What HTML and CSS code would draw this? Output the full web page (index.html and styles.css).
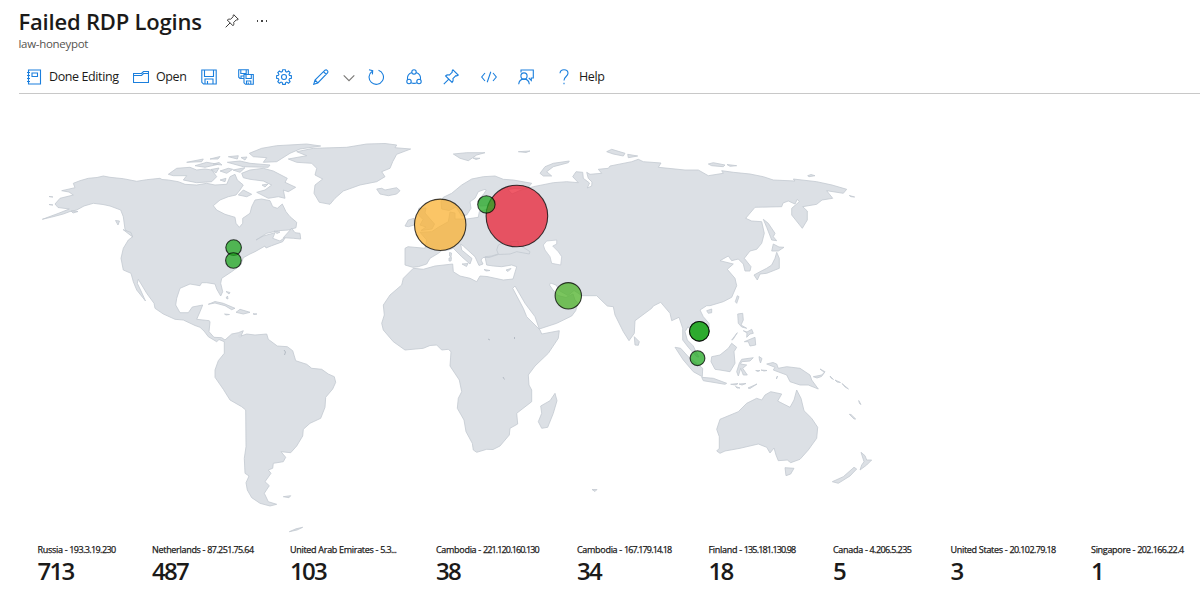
FILE: index.html
```
<!DOCTYPE html>
<html lang="en">
<head>
  <meta charset="UTF-8">
  <meta name="viewport" content="width=device-width, initial-scale=1.0">
  <title>Failed RDP Logins</title>
  <link rel="stylesheet" href="styles.css">
</head>
<body>

  <!-- Header -->
  <header class="header">
    <div class="title-row">
      <h1>Failed RDP Logins</h1>
      <svg class="title-pin" viewBox="0 0 16 16"><path d="M10 .8 15.200 6l-1.400.9-.9-.2-3 3c.5 1.600.2 2.700-.8 3.700L2.600 6.900c1-1 2.200-1.300 3.700-.8l3-3-.2-.9zM5.800 10.200.8 15.200"/></svg>
      <span class="dots"><i></i><i></i><i></i></span>
    </div>
    <div class="subtitle">law-honeypot</div>
  </header>

  <!-- Toolbar -->
  <nav class="toolbar">
    <div class="tool">
      <svg viewBox="0 0 16 16"><path d="M2.500 1h12v14h-12zM6 4h5.500v3.500H6zM1 3.500h3M1 6.500h3M1 9.500h3M1 12.500h3"/></svg>
      <span class="done-label">Done Editing</span>
    </div>
    <div class="tool">
      <svg viewBox="0 0 16 16"><path d="M.5 13.500v-9h8l2-2h5v11zM.5 6.500h8l2-2h5"/></svg>
      <span class="open-label">Open</span>
    </div>
    <svg viewBox="0 0 16 16"><path d="M.8 1h14.400v14H2.500L.8 13.300zM3.500 1v6.500h9V1M4 15v-5h8v5M6.500 12v3"/></svg>
    <svg viewBox="0 0 16 16"><path d="M6 9.500H2L.7 8.200V.7h9.600V5M2.800.7v3.800h5.400V.7M3 9.500V7h3M6 5.500h9.300v9.800H7.500L6 13.800zM8 5.500v4h5.300v-4M8.500 15.300V12h4.300v3.300M10.300 13.500v1.800"/></svg>
    <svg viewBox="0 0 16 16"><path d="M6.700.7h2.600l.4 1.900 1.100.5 1.700-1.100 1.600 1.600L13 5.200l.5 1.200 1.900.4v2.500l-1.900.4-.5 1.200 1.100 1.700-1.600 1.600-1.700-1.100-1.100.5-.4 1.800H6.700l-.4-1.800-1.200-.5-1.700 1.100-1.600-1.600 1.100-1.700-.5-1.200-1.800-.4V6.800l1.800-.4.500-1.200-1.100-1.600L3.400 2l1.700 1.100 1.200-.5z"/><circle cx="8" cy="8" r="2.500"/></svg>
    <svg viewBox="0 0 16 16"><path d="M.7 15.300 2 11 12 1.200q1.200-.9 2.300.3t.2 2.500L4.800 14zM2 11l2.800 3M10.500 2.700l2.800 2.800"/></svg>
    <svg class="chevron" viewBox="0 0 12 8"><path d="M.7 1.300 6 6.600l5.300-5.300"/></svg>
    <svg viewBox="0 0 16 16"><path d="M4.200 2.200A7.200 7.200 0 1 0 10.500 1.300M1 .8l3.700.8-.3 3.800"/></svg>
    <svg viewBox="0 0 16 16"><circle cx="8" cy="2.900" r="2.200"/><circle cx="3" cy="12.500" r="2.200"/><circle cx="13" cy="12.500" r="2.200"/><path d="M5.800 3.500C2.500 4.800 1 7.500 1.500 10.800M10.200 3.500c3.300 1.300 4.800 4 4.300 7.300M5.200 13.800q2.800 1.200 5.600 0"/></svg>
    <svg viewBox="0 0 16 16"><path d="M10 .8 15.200 6l-1.400.9-.9-.2-3 3c.5 1.600.2 2.700-.8 3.700L2.600 6.900c1-1 2.200-1.300 3.700-.8l3-3-.2-.9zM5.800 10.200.8 15.200"/></svg>
    <svg viewBox="0 0 16 16"><path d="M4 4 .7 8 4 12M12 4l3.300 4-3.300 4M9.800 2.800 6.200 13.200"/></svg>
    <svg viewBox="0 0 16 16"><path d="M3 3.500V1h12.300v8h-2v2.500l-2.500-2.500"/><circle cx="6" cy="7" r="3.100"/><path d="M.7 15.300c.2-3 2.300-5.200 5.300-5.200s5.100 2.200 5.300 5.200"/></svg>
    <div class="tool help">
      <svg viewBox="0 0 16 16"><path d="M4 4.200C4.200 2 5.700.8 8 .8s4 1.300 4 3.500c0 3.100-4 3.400-4 7.100M8 13.800v1.500"/></svg>
      <span>Help</span>
    </div>
  </nav>

  <!-- Map -->
  <main class="map">
    <svg viewBox="0 94 1200 446">
      <g class="land">
        <!-- Americas -->
        <path d="M73.300 183.300 80 180.700 88.300 178.300 97 177.500 103.300 176 110 177.300 123.300 178.700 136.700 181.300 146.700 179.700 160 178.300 162 179.500 168.300 180 178.300 181.700 185 184.300 196.700 185 206.700 183.300 215 185 226.700 184.300 230 176.700 235 174.300 237.300 180 243.300 185 240 190 236 195 228.300 196.700 220 200 213.300 205.700 216.700 210 225 214.300 235 217.300 236 223.300 239.300 227.300 242.700 223.300 242.700 218.300 250 213.300 251.700 206.700 255 200 261.700 199 270 200.700 272.700 206.700 277.300 208.300 282.300 204 286 211.700 290 216.700 296.700 222.300 296 227.700 288.300 230 278.300 230.700 266.700 233.300 256 240 263.300 236 275 232.700 272.700 238.300 280 241 286 236.500 282.700 241.700 271.700 245.700 266 248 265 246 255 251.700 250 254 243.300 257.700 240.700 265 231.700 271.700 221.700 278.300 220.700 283.300 222.700 291.700 220.700 296 216.700 289 215 284 206.700 282.700 201.700 282.700 200 285.700 190 284 180 288.300 176.700 298.300 175.700 305 180 312.700 188.300 312.700 192.300 307 202.700 305 200 311.700 196.700 319.300 209.300 320.700 210 322 209 331.700 214 337.300 221.700 337.700 225 340 231.700 334 238.300 332.700 243.300 330.700 241 336 246.700 334 255 335 266.700 334 268.300 339.300 277.300 346 287.300 346.700 292.700 350.700 295.700 360.700 306.700 364.300 311.700 368.300 321.700 369.300 328.300 374 334.300 376.700 335.700 382.300 332.700 389 325.700 397.300 325 407.300 320.700 418.300 310 423.300 303.300 429.300 302.700 436 296.700 446 290.700 452.700 281 451.700 285.700 457.300 283.300 461.700 273.300 463.300 272.700 468.300 268.300 470 271 473.300 265 481.700 269.300 485.700 264.300 493.300 268.300 501.700 276.700 504.300 270 506 260 503.300 251.700 497.700 247.300 490 246 482.700 249 476 245 473.300 244.300 458.300 246 446.700 245.700 410 241.700 406.700 230 400 223.300 389.300 215 377.300 215 370 218.300 360.700 224.300 353.300 224.300 341.700 219 339.500 216.700 341.700 208.300 336.700 204 331 200 327.300 195 325.500 183.300 320 175 319.300 163.300 314 155 308.300 154 303.300 146.700 293.300 138.300 279.300 137.300 283.300 141 291 145.500 301 136.700 290 133.300 281.700 131 273.300 123.300 270 121 258.300 123.300 248.300 128.300 240 132.700 236.700 125 229.300 123.300 216.700 120.700 210 110 206 103 204.500 93.300 203.300 84 206 76.700 210 70 211.500 63.300 214 54 216.500 42.300 219.300 58 213.500 69.300 209 58 207.500 55 204 60 198.300 73.300 195 69 192 61.700 190.700 75 187.700Z"/>
        <path d="M168.300 174.300 176.700 168.300 190 167.300 196.700 170 205 169 211.700 170 216.700 176.700 211.700 181.700 196.700 182.700 183.300 180 186.700 175.700 173.300 175.700Z"/>
        <path d="M186.700 162.300 203.300 159 201.700 161.700ZM195 165.700 206.700 162.300 218.300 164.300 205 167.300ZM210 159 220 156.500 218 159ZM220 171 228.300 168.300 232.700 169.300 226.700 173.300ZM220 180 226 178.300 225 181.700ZM228.300 156.700 238.300 155.700 237.300 159ZM227.300 162.300 240 161 250 163.300 270 165 268.300 167.300 243.300 166.700ZM233 170 245 167.700 240 172.300ZM211 169.500 219 168 216 173ZM213 164 219 162.500 222 165ZM241 157.500 247 157 245 160Z"/>
        <path d="M249.300 153.300 261.700 148.300 276.700 145.700 306.700 144 320.700 146 300 149 290 153.300 276.700 161.700 263.300 162.300 266.700 157.700 253.300 156.700Z"/>
        <path d="M241.700 173.300 250 170 263.300 168.300 273.300 171 287.300 178.300 285 182.300 295.700 187.300 288.300 191.700 283.300 190 285 198.300 278.300 196.700 268.300 198.300 256.700 192.300 265 190 271.700 185 263.300 181 250 179.300 243.300 177.700ZM238.300 195 243.300 190 251.700 194.300 246.700 196.700ZM262 185 268 184 265 187ZM283.300 237.700 291.700 228.300 295 232.700 300 233.300 300.700 239 293.300 238.300ZM274 231 280 232 277 233.500Z"/>
        <path d="M288.300 159 306.700 155.700 296.700 151.700 313.300 148.300 346.700 147.300 366.700 144 385 143.500 396.700 145 395 147.700 410.700 149 396.700 154.300 392.700 161.700 390 168.300 381.700 171.700 385 176.700 376.700 181.700 360 185 343.300 191 335 198.300 330 204.300 319.300 202.300 314 193.300 315 185 322.700 179 315 175 316.700 168.300 311.700 163.300 296.700 162.300Z"/>
        <path d="M376.700 189 381.700 188.300 385 190 396.700 187.700 400 190.700 396.700 194 388.300 195.700 380 194Z"/>
        <path d="M208.300 304.300 215 301.500 223.300 303.300 235 308.300 231.700 309.700 225 305.700 215 303ZM236 312.300 240 309.300 250 312.300 243.300 314ZM224.500 314 229.500 314.500 226 315ZM253 313.700 257 314 254 314.500ZM226 291.500 230 292.500 229 294ZM226 298 228 299 227.500 296Z"/>
        <path d="M283.300 496.700 290.700 495.700 289 497.700ZM289.300 531.700 296 528.800 302.700 527.300 297 530ZM123 229.500 131 232.500 132.700 237ZM115.500 220.500 119.500 221 118 225ZM49 196.500 53 197ZM49 204.500 53 205ZM71 211 78 211.500 73 213ZM592 489.500 597 489.500 595 491.500Z"/>

        <!-- Europe, Asia, Africa -->
        <path d="M405 248.300 408 246.700 425 248.300 426.700 240 420 232.300 431.700 231.700 438.300 227.300 448.300 221.700 450 212 455 213 455 219 466.700 219 478.300 217.300 479.300 211.700 486 209.500 497 208 492 205.500 480 206 478.500 200 484 193.500 486.300 190 485 189.300 478.300 191.700 475 198.300 470 201.700 471 208.300 466.700 215 461.700 216 456 207 449 210.500 441.700 209 441 201.700 443.300 197.300 451.700 193.300 461.700 185 471.700 179 483.300 176.700 495 176 503.300 179.300 513.300 180 531.700 183.300 527 189 514 188.500 508 189.500 512 194 521 190 533.300 186.700 553.300 182.700 566.700 181.700 578.300 182.700 572.700 176.700 576 171.700 582.700 172.300 583.300 178.300 589.500 183 587.300 188 591.700 186 592 182 588.300 178.300 586.700 172.300 590 174.300 601.700 173.300 598.300 169.300 608.300 168.300 610 166 631.700 161.700 638.300 159.300 643.300 161.700 661 163 658.300 167.300 685 170 698.300 170 708.300 175.700 723.300 173.300 721.700 170.700 733.300 172.300 750 174 763.300 176.700 773.300 180 795 181 793.300 179 816.700 181.700 832 185 846.700 189.300 843.300 193.300 826.700 190.700 832.700 198.300 822 200 816.700 204.300 802.700 206.700 807.300 211 807.300 220 802.300 228.300 791.700 215 791.700 208.300 799.300 201.700 797.300 199.300 795 204 788.300 201 783 203 781.700 206.700 755 207.300 745.700 218.300 751.700 221 761.700 221.700 764.300 233.300 761.700 243.300 756.700 249.300 750 251 744.300 258.300 751 266.700 750 271 745 271 743.300 264 738.300 259 731.700 260.700 728.300 256 720 260.700 733.300 264 727.300 269.300 735 278.300 736.700 285.700 731.700 297.300 723.300 301.700 710 305.700 706.700 305.700 700 310 703.300 316.700 709 323.300 709.300 331.700 703.300 338.300 698 341 695 335 688 326.700 685 331.700 687.300 340 693.300 346 696 351.700 699 357 696.700 356.700 688.300 347.300 682.700 340 682.700 328.300 679 317.300 671.700 320.700 670 313.300 660.700 302.300 653.300 306 651.700 308.300 635 320.700 634.300 333.300 629 340.700 623.300 331.700 615 315 613.300 306.700 607.300 306 600 299 596.700 295.700 582 295.700 574 290.500 568 295.500 560 291 556 285 550.500 283 549.500 285 553 290 558 295.500 566 297.500 573 294 575 300 578 303 575.700 310.700 571.700 316 556.700 323.300 539.300 329 535 316.700 525 303.300 515 286 512.700 288.300 523.300 308.300 526.700 316.700 540 330 541.700 334 559.300 330.700 558.300 338.300 548.300 353.300 535 366 528.300 375 529 385 531.700 390 531.700 401.700 516.700 413.300 517.700 424 510 428.300 509.300 435 500 446 493 449.500 486.700 449.300 476.700 452.300 473.300 450 472.300 443.300 466 431.700 464 420 457.300 408.300 458.300 398.300 461.700 391.700 459.300 380 450 366 451 351.700 448.300 349.300 441.700 350 436.700 345 430 345.500 423.300 348.300 405 350 393.300 341.700 383.300 330 381.700 323.300 384.300 315 383.300 305 390 295 401.700 285 403.300 278.300 413.300 268.300 423.300 269.300 435 266 452.700 264 453.300 271.700 460 276 470 278.300 476.700 281.700 480 276 487 276.500 503.300 280 513 279 516.700 266.700 511.700 265 501.700 266.700 493.300 266 486.700 265 485 256.700 491.700 256 498.300 254 496.700 250 498.300 245 505 242 512 246 510 242 518 241 518 245 523.300 247.300 530 251.700 529.300 254 516.700 251.700 510 254 498.300 254.500 489 257.500 483 257.500 481 260 483 264 479 265.500 475 256.700 463.300 246 460.700 244 461.700 250 472 258.500 470 264 461.700 256.700 453.300 248.300 448.300 250 441.700 250.700 438.300 253.300 430 258.300 426.700 264 418.300 266.700 412.700 267.300 405 265Z"/>
        <path d="M421 230.500 426 227 420 225 423 219.500 417.500 214 419 208 426 208 425 213 431 220 434.500 224 432 229 425 230ZM405 226 408.300 220 414 218.300 414.300 225 408.300 226.700Z"/>
        <path d="M453.300 154 466.700 152.700 485 152.700 476.700 155 468.300 160.700 460 158.300ZM473 158 480 158.300 476 159.500ZM518.300 151.700 530 151 526 152.500ZM540 173.300 545 166.700 553.300 163.300 569.300 161 568.300 162.700 553.300 166.700 546.700 171.700 551.700 176 543.300 176Z"/>
        <path d="M606.700 151.700 611.700 149.300 625 153.300 623.300 156 613.300 154ZM627.700 154.300 637.700 156 628.300 157.700ZM708.300 164 713.300 162.700 725 165 723.300 166.700 711.700 165.700ZM727 164.500 736.700 165.700 730 166.300ZM807.700 175.700 811 174.500 815 175.700 809 176.700ZM849.300 195.500 854.700 197 851 196.700Z"/>
        <path d="M449.500 252.500 451.500 253 451 257 449.500 256ZM449 258 451.500 257.500 451 261 449 261ZM462 264 468 263.500 466.500 266.500ZM484 269.500 490 270.500 486 271ZM506 270 511 268.500 508 271.500ZM555 393.300 557 400.700 553.300 413.300 547.700 427.300 541.700 428.300 538.300 421.700 541.700 413.300 540.700 406 550 400.700Z"/>
        <path d="M763.300 219.300 768.300 223.300 775 233.300 773.300 236.700 776.700 240.700 771.700 240 766.700 227.300ZM773.300 244 779 247 784 247.300 778.300 251 771.700 251ZM776.700 252.300 779.300 258.300 779.300 268.300 773.300 270.700 766.700 273.300 760 274 757.300 280 754 275 760 271.700 766.700 268.300 771.700 265 775 258.300Z"/>
        <path d="M737.300 295.700 739 296.700 736.700 303.300 735.300 301.700ZM706.700 310.700 711.700 309 711.700 312.700 708.300 313.300ZM634.300 336.700 639.300 341.700 638.300 345.300 635 345Z"/>
        <path d="M737.700 314 742.700 313.300 743.300 320 741 325 746.700 328.300 741.700 327 738.300 323.300ZM743.300 330.700 747 332 751.700 329.300 753.300 333.300 750 334 746.700 337.300 747 333ZM744.300 341.700 755 337.300 755.700 345 750 346 748.300 341.700ZM731.700 340 737.300 332.700 733 339.500Z"/>
        <path d="M711.700 356.700 720 355 728.300 348.300 731.700 343.300 736.700 347.300 734 351.700 735 363.300 730 371.700 720 370 715 369.300 711 361.700ZM741.700 359.300 753.300 357.700 750 361 741.700 361.700 740.500 364 746.700 365 742.700 368.300 747.300 375 743.300 375 740.700 368.300 738.300 376 736.700 371.700 739.300 363.300ZM675 347.300 680.700 348.300 688.300 356.700 702.700 368.300 702.300 376.700 693.300 371.700 683.300 360ZM701.700 377.300 713.300 378.300 726.700 383.300 725 384.300 703.300 380.700Z"/>
        <path d="M730.700 384.300 738 383.500 736 385ZM739 384 746 383.500 742 385ZM735.500 386.500 740 388 737 388ZM748 388 757 384 750 388.500ZM759 356.500 762 358.500 760.500 363 759.500 360ZM755.700 370.500 760 370.500 758 371.500ZM761 370 767 370.500 764 371ZM776.500 378 777.500 376 776.500 379Z"/>
        <path d="M766.700 364 773 362.500 776.700 364 778.300 368.300 786.700 366.700 800 368.300 810 375 811.700 380 818.300 389 808.300 385 800 385 790 381.700 786.700 375 773.300 370 775 367.300ZM813.300 376.700 821.700 375 825 371.700 820 369 824.500 372.500 821.500 376.500 817 378ZM830 376 833.500 379.500 831 378ZM835 380 840.500 382.500 837 382ZM842 383.500 848.500 389 845 387ZM858.700 400.500 861 404.500 859.500 403.500ZM849.300 414.300 851 414.500 855.700 419 854 419Z"/>

        <!-- Oceania -->
        <path d="M716.700 451 719.300 448.300 719.300 436.700 716.700 429.300 720 419.300 738.300 411.700 746.700 403.300 756.700 398.300 761.700 400 765 395 770.700 391.700 781.700 394 777.700 401 790 407.300 794 400 796.700 390 801 398.300 804 410.700 811.700 418.300 817.700 427.300 816.700 438.300 808.300 450 800 459.300 790.700 462.700 787.300 460 778.300 460.700 776 455 774 448 770 453 766.700 447.300 758.300 444 740 448.300 725 451 720 453.300ZM785 467.700 794 468.300 790.700 474 786 475.700ZM861 452.300 865 455.700 866.700 460 871.700 460 866.700 465 860 470 861.700 465 864 461.700ZM832.300 481.700 843.300 476.700 854 467.300 856.700 469 850 476 838.300 483.300Z"/>
      </g>
      <!-- Inland water -->
      <path class="water" d="M543.300 245 546.700 241 556.700 240 556.700 244 552.700 246 558.300 251.700 561.700 256.700 560.700 265 551.700 263.300 550 256.700 545 250Z"/>
      <path class="lake" d="M284 350l1.500 2-1 3M488 339l2 1M514.500 337v2M503 377l1.500 2.500"/>
      <circle class="water" cx="240" cy="336" r="1"/>

      <!-- Login attempts -->
      <g class="bubbles">
        <circle class="red" cx="516.900" cy="216" r="30.800"/>
        <circle class="orange" cx="440.200" cy="224.800" r="25.700"/>
        <circle class="lime" cx="568.300" cy="295.800" r="13.200"/>
        <circle class="green" cx="699.300" cy="331.300" r="9.800"/>
        <circle class="green" cx="699.300" cy="331.300" r="9.800"/>
        <circle class="green" cx="486.400" cy="204.400" r="8.700"/>
        <circle class="green" cx="233.600" cy="247.600" r="7.800"/>
        <circle class="green" cx="233.400" cy="260.500" r="7.800"/>
        <circle class="green" cx="697.500" cy="358.200" r="7.400"/>
      </g>
    </svg>
  </main>

  <!-- Totals per source -->
  <section class="stats">
    <div class="stat"><span>Russia - <i>193.3.19.230</i></span><b>713</b></div>
    <div class="stat"><span>Netherlands - <i>87.251.75.64</i></span><b>487</b></div>
    <div class="stat"><span>United Arab Emirates - <i>5.3...</i></span><b>103</b></div>
    <div class="stat"><span>Cambodia - <i class="tight">221.120.160.130</i></span><b>38</b></div>
    <div class="stat"><span>Cambodia - <i class="tight">167.179.14.18</i></span><b>34</b></div>
    <div class="stat"><span>Finland - <i class="tight">135.181.130.98</i></span><b>18</b></div>
    <div class="stat"><span>Canada - <i>4.206.5.235</i></span><b>5</b></div>
    <div class="stat"><span>United States - <i>20.102.79.18</i></span><b>3</b></div>
    <div class="stat"><span>Singapore - <i>202.166.22.4</i></span><b>1</b></div>
  </section>

</body>
</html>
```
FILE: styles.css
```
* {
  padding: 0;
  margin: 0;
  box-sizing: border-box;
}

body {
  font-family: "Open Sans", "Noto Sans", sans-serif;
  background: #fff;
  color: #1b1a19;
  height: 596px;
  overflow: hidden;
}

svg {
  display: block;
}

/* Header */
.header {
  height: 60px;
  padding: 6px 0 0 18.5px;
}

.title-row {
  display: flex;
  align-items: center;
  height: 30px;
}

h1 {
  width: 206px;
  font-size: 22px;
  font-weight: 600;
  letter-spacing: -0.2px;
  line-height: 30px;
  white-space: nowrap;
}

.title-pin {
  width: 14px;
  height: 14px;
  fill: none;
  stroke: #323130;
  stroke-width: 1.1;
}

.dots {
  display: flex;
  gap: 3px;
  margin-left: 18px;
}

.dots i {
  width: 1.5px;
  height: 1.5px;
  background: #444;
}

.subtitle {
  font-size: 11.5px;
  letter-spacing: -0.3px;
  line-height: 16px;
  color: #55534f;
}

/* Toolbar */
.toolbar {
  display: flex;
  align-items: center;
  gap: 21.5px;
  height: 34px;
  margin-left: 18.5px;
  padding-left: 7.5px;
  border-bottom: 1px solid #c8c8c8;
  font-size: 12.5px;
  letter-spacing: -0.4px;
}

.toolbar svg {
  flex: none;
  width: 16px;
  height: 16px;
  fill: none;
  stroke: #1b7fdd;
  stroke-width: 1.1;
}

.tool {
  display: flex;
  align-items: center;
  gap: 7px;
  white-space: nowrap;
}

.done-label {
  width: 62.5px;
}

.open-label {
  width: 23px;
}

.help {
  gap: 7.5px;
}

.toolbar .chevron {
  width: 12px;
  height: 8px;
  margin: 2px -8px 0;
  stroke: #797775;
}

/* Map */
.map svg {
  width: 1200px;
  height: 446px;
}

.land path {
  fill: #dce0e5;
  stroke: #c3c9d1;
  stroke-width: 0.8;
  stroke-linejoin: round;
}

.water {
  fill: #fff;
  stroke: #c3c9d1;
  stroke-width: 0.7;
}

.lake {
  fill: none;
  stroke: #a8b0ba;
  stroke-width: 0.8;
}

.bubbles circle {
  fill-opacity: 0.75;
  stroke: #000;
  stroke-opacity: 0.75;
  stroke-width: 1.1;
}

.red {
  fill: #e92335;
}

.orange {
  fill: #f9b133;
}

.lime {
  fill: #4eb228;
}

.green {
  fill: #22a722;
}

/* Stats */
.stats {
  display: grid;
  grid-template-columns: 114.5px 138px 146px 141px 131.5px 124.5px 117.5px 140.5px auto;
  padding: 4px 0 0 37.5px;
}

.stat {
  display: flex;
  flex-direction: column;
  white-space: nowrap;
}

.stat span {
  font-size: 9px;
  letter-spacing: -0.3px;
  line-height: 12px;
  -webkit-text-stroke: 0.25px #1b1a19;
}

.stat i {
  font-style: normal;
  letter-spacing: -0.6px;
}

.stat .tight {
  letter-spacing: -0.87px;
}

.stat b {
  font-size: 24px;
  font-weight: 600;
  letter-spacing: -1.7px;
  line-height: 29px;
}
```
